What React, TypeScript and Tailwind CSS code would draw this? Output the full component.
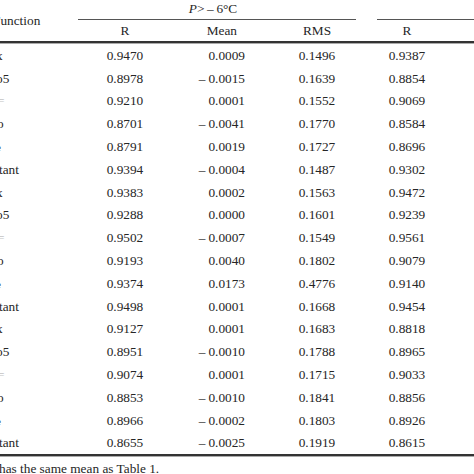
import React from "react";

type Row = { label: string; r: string; mean: string; rms: string; r2: string };

// each group of six repeats the same (clipped) function names
const labels = ["x", "o5", "=", "o", "e", "tant"];

const values: [string, string, string, string][] = [
  ["0.9470", "0.0009", "0.1496", "0.9387"],
  ["0.8978", "–0.0015", "0.1639", "0.8854"],
  ["0.9210", "0.0001", "0.1552", "0.9069"],
  ["0.8701", "–0.0041", "0.1770", "0.8584"],
  ["0.8791", "0.0019", "0.1727", "0.8696"],
  ["0.9394", "–0.0004", "0.1487", "0.9302"],
  ["0.9383", "0.0002", "0.1563", "0.9472"],
  ["0.9288", "0.0000", "0.1601", "0.9239"],
  ["0.9502", "–0.0007", "0.1549", "0.9561"],
  ["0.9193", "0.0040", "0.1802", "0.9079"],
  ["0.9374", "0.0173", "0.4776", "0.9140"],
  ["0.9498", "0.0001", "0.1668", "0.9454"],
  ["0.9127", "0.0001", "0.1683", "0.8818"],
  ["0.8951", "–0.0010", "0.1788", "0.8965"],
  ["0.9074", "0.0001", "0.1715", "0.9033"],
  ["0.8853", "–0.0010", "0.1841", "0.8856"],
  ["0.8966", "–0.0002", "0.1803", "0.8926"],
  ["0.8655", "–0.0025", "0.1919", "0.8615"],
];

const rows: Row[] = values.map(([r, mean, rms, r2], i) => ({
  label: labels[i % 6],
  r,
  mean,
  rms,
  r2,
}));

function Label({ text }: { text: string }) {
  // the reference is cropped on the left, so only the tail of each name shows
  if (text === "x") return <span className="-ml-[4px]">x</span>;
  if (text === "o5") return <span className="-ml-[4px]">o5</span>;
  if (text === "=") return <span className="-ml-[3px] text-[#c4c4c4]">=</span>;
  if (text === "o") return <span className="-ml-[3px]">o</span>;
  if (text === "e") return <span className="-ml-[4px] text-[11px]">e</span>;
  return <span className="-ml-[1px]">{text}</span>;
}

function MeanValue({ v }: { v: string }) {
  const neg = v.startsWith("–");
  return (
    <span>
      {neg && <span className="mr-[3px]">–</span>}
      {neg ? v.slice(1) : v}
    </span>
  );
}

export default function App() {
  const grid = "grid grid-cols-[78px_94px_106px_78px_21px_60px_1fr]";

  return (
    <div className="w-[474px] h-[474px] overflow-hidden bg-white text-[#262626] text-[13.3px] leading-none font-['Liberation_Serif',serif]">
      {/* header */}
      <div className={grid}>
        <div className="row-span-2 flex items-center overflow-hidden pt-[1px]">
          <span className="-ml-[7px]">Function</span>
        </div>
        <div className="col-span-3 h-[20px] flex items-center justify-center pr-[8px] pb-[1px] border-b border-[#555]">
          <span>
            <i>P</i>&gt;&thinsp;–&thinsp;6°C
          </span>
        </div>
        <div className="h-[20px]" />
        <div className="col-span-2 h-[20px] border-b border-[#555]" />
        <div className="h-[21px] flex items-center justify-center">R</div>
        <div className="h-[21px] flex items-center justify-end pr-[41px]">Mean</div>
        <div className="h-[21px] flex items-center justify-center">RMS</div>
        <div />
        <div className="h-[21px] flex items-center justify-center">R</div>
        <div />
      </div>
      <div className="h-[2px] bg-[#333]" />
      <div className="h-px bg-[#aaa]" />

      {/* body */}
      <div>
        {rows.map((row, i) => (
          <div key={i} className={`${grid} h-[22.8px] items-center`}>
            <div className="overflow-hidden whitespace-nowrap">
              <Label text={row.label} />
            </div>
            <div className="text-center">{row.r}</div>
            <div className="text-right pr-[33px]">
              <MeanValue v={row.mean} />
            </div>
            <div className="text-center">{row.rms}</div>
            <div />
            <div className="text-center">{row.r2}</div>
            <div />
          </div>
        ))}
      </div>
      <div className="h-[2px] bg-[#333]" />
      <div className="h-px bg-[#aaa]" />

      <div className="pt-[5px] whitespace-nowrap overflow-hidden">
        <span className="-ml-[1px]">has the same mean as Table 1.</span>
      </div>
    </div>
  );
}
